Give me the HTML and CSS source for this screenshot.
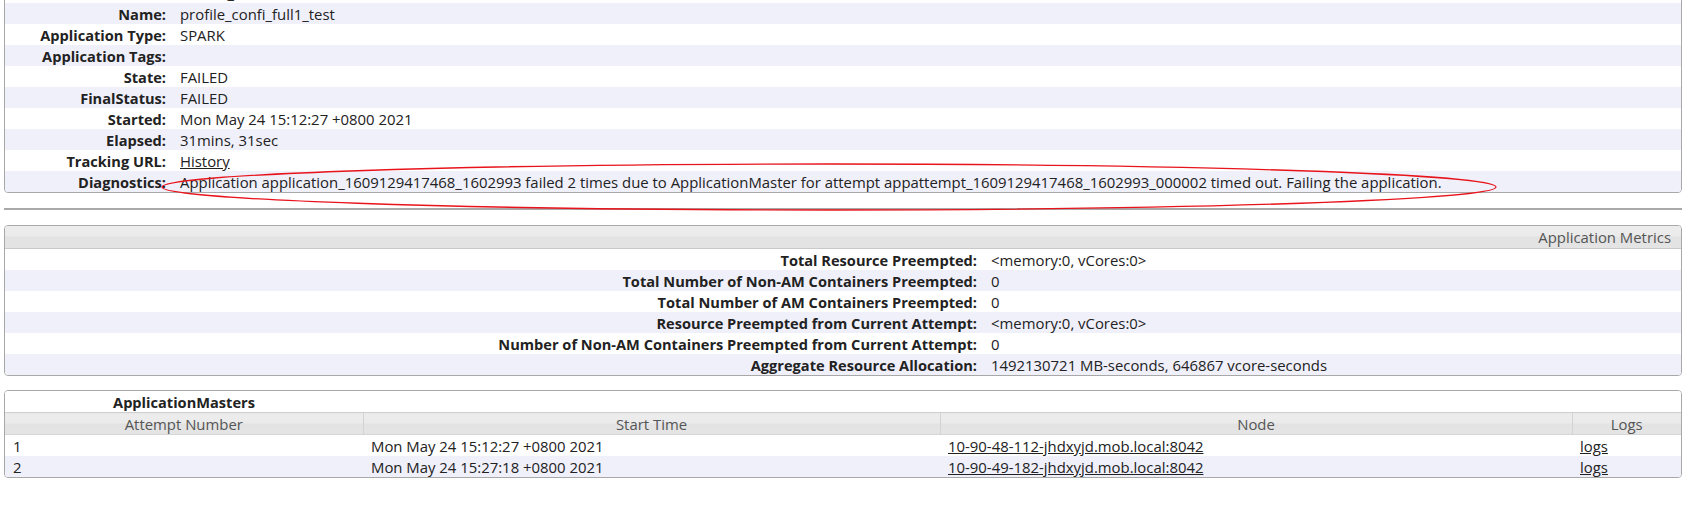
FILE: index.html
```html
<!DOCTYPE html>
<html>
<head>
<meta charset="utf-8">
<title>Application Overview</title>
<link rel="stylesheet" href="styles.css">
</head>
<body>
<div class="page">
  <div class="box overview">
    <table class="info info-top">
      <tr><th>User:</th><td>hdfs01_bi</td></tr>
      <tr><th>Name:</th><td>profile_confi_full1_test</td></tr>
      <tr><th>Application Type:</th><td>SPARK</td></tr>
      <tr><th>Application Tags:</th><td></td></tr>
      <tr><th>State:</th><td>FAILED</td></tr>
      <tr><th>FinalStatus:</th><td>FAILED</td></tr>
      <tr><th>Started:</th><td>Mon May 24 15:12:27 +0800 2021</td></tr>
      <tr><th>Elapsed:</th><td>31mins, 31sec</td></tr>
      <tr><th>Tracking URL:</th><td><a href="#">History</a></td></tr>
      <tr><th>Diagnostics:</th><td>Application application_1609129417468_1602993 failed 2 times due to ApplicationMaster for attempt appattempt_1609129417468_1602993_000002 timed out. Failing the application.</td></tr>
    </table>
  </div>

  <div class="rule"></div>

  <div class="box metrics">
    <div class="box-header">Application Metrics</div>
    <table class="info info-metrics">
      <tr><th>Total Resource Preempted:</th><td>&lt;memory:0, vCores:0&gt;</td></tr>
      <tr><th>Total Number of Non-AM Containers Preempted:</th><td>0</td></tr>
      <tr><th>Total Number of AM Containers Preempted:</th><td>0</td></tr>
      <tr><th>Resource Preempted from Current Attempt:</th><td>&lt;memory:0, vCores:0&gt;</td></tr>
      <tr><th>Number of Non-AM Containers Preempted from Current Attempt:</th><td>0</td></tr>
      <tr><th>Aggregate Resource Allocation:</th><td>1492130721 MB-seconds, 646867 vcore-seconds</td></tr>
    </table>
  </div>

  <div class="box masters">
    <table class="grid">
      <colgroup>
        <col class="c1"><col class="c2"><col class="c3"><col class="c4">
      </colgroup>
      <tr class="caption-row"><th class="caption">ApplicationMasters</th><th></th><th></th><th></th></tr>
      <tr class="head-row"><th>Attempt Number</th><th>Start Time</th><th>Node</th><th>Logs</th></tr>
      <tr class="data-row"><td>1</td><td>Mon May 24 15:12:27 +0800 2021</td><td><a href="#">10-90-48-112-jhdxyjd.mob.local:8042</a></td><td><a href="#">logs</a></td></tr>
      <tr class="data-row"><td>2</td><td>Mon May 24 15:27:18 +0800 2021</td><td><a href="#">10-90-49-182-jhdxyjd.mob.local:8042</a></td><td><a href="#">logs</a></td></tr>
    </table>
  </div>

  <svg class="annotation" width="1692" height="240" viewBox="0 0 1692 240" xmlns="http://www.w3.org/2000/svg">
    <ellipse cx="829" cy="187" rx="667" ry="23" fill="none" stroke="#e8141b" stroke-width="1.3"/>
  </svg>
</div>
</body>
</html>
```

FILE: styles.css
```css
html, body {
  margin: 0;
  padding: 0;
  background: #ffffff;
}

body {
  font-family: "Open Sans", "Noto Sans", "Liberation Sans", sans-serif;
  font-size: 14.9px;
  color: #222222;
}

.page {
  position: relative;
  display: flow-root;
  width: 1692px;
  height: 524px;
  overflow: hidden;
  padding-left: 4px;
  box-sizing: border-box;
}

.box {
  width: 1678px;
  box-sizing: border-box;
  border: 1px solid #a8a8a8;
  border-radius: 4px;
  overflow: hidden;
}

.overview {
  margin-top: -19px;
}

.rule {
  width: 1678px;
  height: 2px;
  background: #a9a9a9;
  margin: 15px 0 15px 0;
}

.metrics {
  margin-bottom: 14px;
}

.box-header {
  height: 22px;
  line-height: 22px;
  padding-right: 10px;
  text-align: right;
  color: #555555;
  background: linear-gradient(to bottom, #ececec 0%, #ebebeb 45%, #e3e3e3 50%, #e4e4e4 100%);
  border-bottom: 1px solid #c9c9c9;
}

table {
  border-collapse: collapse;
  border-spacing: 0;
  width: 100%;
  table-layout: fixed;
}

.info th,
.info td {
  height: 21px;
  padding: 2px 0 0 0;
  line-height: 19px;
  box-sizing: border-box;
  white-space: nowrap;
  vertical-align: top;
}

.info th {
  text-align: right;
  font-weight: 700;
  font-size: 14.6px;
  padding-right: 6px;
}

.info td {
  text-align: left;
  padding-left: 8px;
}

.info-top th {
  width: 167px;
}

.info-metrics th {
  width: 978px;
}

.info tr:nth-child(even),
.grid tr.data-row:nth-child(4) {
  background: #f0f0fb;
}

a {
  color: #222222;
  text-decoration: underline;
}

.grid .c1 { width: 358px; }
.grid .c2 { width: 577px; }
.grid .c3 { width: 632px; }

.grid th,
.grid td {
  height: 21px;
  box-sizing: border-box;
  padding: 2px 0 0 0;
  line-height: 19px;
  white-space: nowrap;
  vertical-align: top;
}

.caption-row th {
  height: 21px;
  font-weight: 700;
  font-size: 14.6px;
  text-align: center;
  background: #ffffff;
}

.head-row th {
  height: 22px;
  font-weight: 400;
  color: #555555;
  text-align: center;
  background: linear-gradient(to bottom, #ececec 0%, #ebebeb 45%, #e3e3e3 50%, #e4e4e4 100%);
  border-top: 1px solid #cfcfcf;
  border-bottom: 1px solid #d6d6d6;
}

.head-row th + th {
  border-left: 1px solid #d3d3d3;
}

.data-row td {
  text-align: left;
  padding-left: 8px;
}

.annotation {
  position: absolute;
  left: 0;
  top: 0;
  pointer-events: none;
}
```
